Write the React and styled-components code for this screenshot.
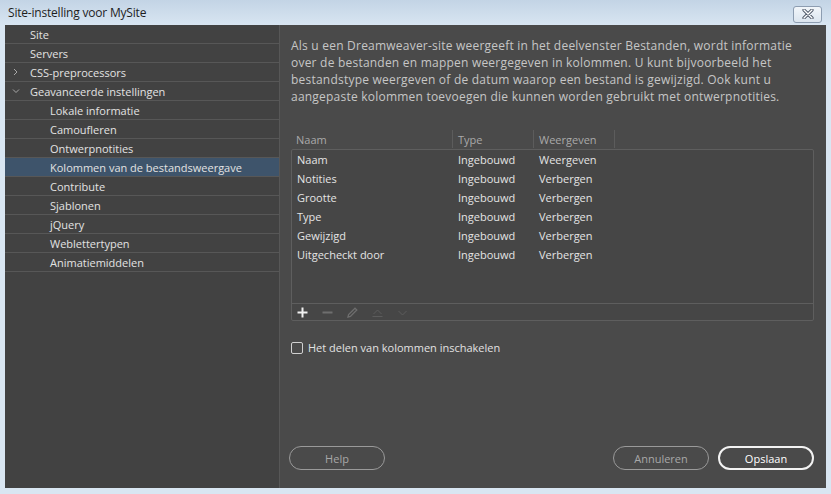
import React from 'react';
import styled, { createGlobalStyle } from 'styled-components';

const Global = createGlobalStyle`
  html, body { margin: 0; padding: 0; background: #d9e6f2; }
  body { font-family: "Open Sans", "Noto Sans", sans-serif; }
`;

const Frame = styled.div`
  width: 831px;
  height: 494px;
  box-sizing: border-box;
  padding: 0 5px 6px 5px;
  background: linear-gradient(#c3d4e5 0px, #d9e6f2 26px, #d9e6f2 100%);
  display: flex;
  flex-direction: column;
`;

const TitleBar = styled.div`
  height: 25px;
  display: flex;
  align-items: center;
  justify-content: space-between;
  padding: 0 4px 0 3px;
  font-family: "Open Sans", sans-serif;
  font-size: 12px;
  color: #1e1e1e;
  letter-spacing: -0.2px;
`;

const CloseButton = styled.div`
  width: 27px;
  height: 15px;
  margin-top: 3px;
  border: 1px solid #8d9db1;
  border-radius: 3px;
  background: linear-gradient(#f2f6fa, #dbe5ef);
  display: flex;
  align-items: center;
  justify-content: center;
`;

const Body = styled.div`
  flex: 1;
  display: flex;
  min-height: 0;
`;

const Sidebar = styled.div`
  width: 275px;
  background: #424242;
  border-right: 1px solid #575757;
`;

const TreeRow = styled.div`
  height: 18px;
  border-bottom: 1px solid #575757;
  display: flex;
  align-items: center;
  padding-left: ${p => (p.$level ? 45 : 7)}px;
  background: ${p => (p.$selected ? '#3e546b' : 'transparent')};
  color: #e2e2e2;
  font-size: 11px;
`;

const Chevron = styled.span`
  width: 18px;
  display: inline-flex;
  align-items: center;
`;

const Main = styled.div`
  flex: 1;
  background: #4a4a4a;
  padding: 12px 12px 18px 11px;
  display: flex;
  flex-direction: column;
`;

const Intro = styled.p`
  margin: 0;
  font-size: 12px;
  letter-spacing: 0.22px;
  line-height: 17px;
  color: #c6c6c6;
  white-space: nowrap;
`;

const HeaderRow = styled.div`
  display: flex;
  margin-top: 25px;
  height: 18px;
`;

const HeaderCell = styled.div`
  width: ${p => p.$w}px;
  box-sizing: border-box;
  padding-left: 5px;
  border-right: 1px solid #5c5c5c;
  font-size: 11px;
  color: #a9a9a9;
  display: flex;
  align-items: center;
`;

const TableBox = styled.div`
  margin-top: 1px;
  height: 170px;
  border: 1px solid #5e5e5e;
  border-radius: 2px;
  background: #464646;
  display: flex;
  flex-direction: column;
`;

const List = styled.div`
  flex: 1;
`;

const Row = styled.div`
  display: flex;
  height: 19px;
  align-items: center;
  font-size: 11px;
  color: #e4e4e4;
`;

const Cell = styled.div`
  width: ${p => p.$w}px;
  padding-left: ${p => p.$pad}px;
  box-sizing: border-box;
`;

const Toolbar = styled.div`
  height: 16px;
  border-top: 1px solid #5e5e5e;
  display: flex;
  align-items: center;
  padding-left: 5px;
  gap: 14px;
`;

const ToolIcon = styled.span`
  width: 11px;
  height: 11px;
  display: inline-flex;
  align-items: center;
  justify-content: center;
`;

const CheckRow = styled.label`
  margin-top: 19px;
  display: flex;
  align-items: center;
  gap: 5px;
  font-size: 11px;
  color: #e2e2e2;
`;

const Box = styled.span`
  width: 10px;
  height: 10px;
  border: 1px solid #d0d0d0;
  border-radius: 2px;
`;

const Footer = styled.div`
  margin-top: auto;
  display: flex;
  align-items: center;
`;

const Button = styled.div`
  width: ${p => (p.$primary ? 92 : 94)}px;
  height: ${p => (p.$primary ? 20 : 22)}px;
  border: ${p => (p.$primary ? '2px solid #f2f2f2' : '1px solid #9a9a9a')};
  border-radius: 12px;
  display: flex;
  align-items: center;
  justify-content: center;
  font-size: 11px;
  color: ${p => (p.$primary ? '#ffffff' : '#a8a8a8')};
  margin-left: ${p => p.$ml || 0}px;
`;

const tree = [
  { label: 'Site' },
  { label: 'Servers' },
  { label: 'CSS-preprocessors', chevron: 'right' },
  { label: 'Geavanceerde instellingen', chevron: 'down' },
  { label: 'Lokale informatie', level: 1 },
  { label: 'Camoufleren', level: 1 },
  { label: 'Ontwerpnotities', level: 1 },
  { label: 'Kolommen van de bestandsweergave', level: 1, selected: true },
  { label: 'Contribute', level: 1 },
  { label: 'Sjablonen', level: 1 },
  { label: 'jQuery', level: 1 },
  { label: 'Weblettertypen', level: 1 },
  { label: 'Animatiemiddelen', level: 1 },
];

const rows = [
  ['Naam', 'Ingebouwd', 'Weergeven'],
  ['Notities', 'Ingebouwd', 'Verbergen'],
  ['Grootte', 'Ingebouwd', 'Verbergen'],
  ['Type', 'Ingebouwd', 'Verbergen'],
  ['Gewijzigd', 'Ingebouwd', 'Verbergen'],
  ['Uitgecheckt door', 'Ingebouwd', 'Verbergen'],
];

function ChevronIcon({ dir }) {
  const d = dir === 'right' ? 'M2 1 L5 4 L2 7' : 'M1 2.5 L4 5.5 L7 2.5';
  return (
    <svg width="8" height="8" viewBox="0 0 8 8">
      <path d={d} fill="none" stroke="#a8a8a8" strokeWidth="1" />
    </svg>
  );
}

export default function App() {
  return (
    <>
      <Global />
      <Frame>
        <TitleBar>
          <span>Site-instelling voor MySite</span>
          <CloseButton>
            <svg width="12" height="10" viewBox="0 0 12 10">
              <path d="M2 1 L10 9 M10 1 L2 9" stroke="#4b5566" strokeWidth="3.2" strokeLinecap="round" />
              <path d="M2 1 L10 9 M10 1 L2 9" stroke="#ffffff" strokeWidth="1.4" strokeLinecap="round" />
            </svg>
          </CloseButton>
        </TitleBar>
        <Body>
          <Sidebar>
            {tree.map(t => (
              <TreeRow key={t.label} $level={t.level} $selected={t.selected}>
                {!t.level && (
                  <Chevron>{t.chevron && <ChevronIcon dir={t.chevron} />}</Chevron>
                )}
                {t.label}
              </TreeRow>
            ))}
          </Sidebar>
          <Main>
            <Intro>
              Als u een Dreamweaver-site weergeeft in het deelvenster Bestanden, wordt informatie<br />
              over de bestanden en mappen weergegeven in kolommen. U kunt bijvoorbeeld het<br />
              bestandstype weergeven of de datum waarop een bestand is gewijzigd. Ook kunt u<br />
              aangepaste kolommen toevoegen die kunnen worden gebruikt met ontwerpnotities.
            </Intro>
            <HeaderRow>
              <HeaderCell $w={162}>Naam</HeaderCell>
              <HeaderCell $w={81}>Type</HeaderCell>
              <HeaderCell $w={81}>Weergeven</HeaderCell>
            </HeaderRow>
            <TableBox>
              <List>
                {rows.map(r => (
                  <Row key={r[0]}>
                    <Cell $w={161} $pad={5}>{r[0]}</Cell>
                    <Cell $w={81} $pad={5}>{r[1]}</Cell>
                    <Cell $w={81} $pad={5}>{r[2]}</Cell>
                  </Row>
                ))}
              </List>
              <Toolbar>
                <ToolIcon>
                  <svg width="11" height="11" viewBox="0 0 11 11">
                    <path d="M5.5 0.5 V10.5 M0.5 5.5 H10.5" stroke="#f0f0f0" strokeWidth="2" />
                  </svg>
                </ToolIcon>
                <ToolIcon>
                  <svg width="11" height="11" viewBox="0 0 11 11">
                    <path d="M0.5 5.5 H10.5" stroke="#6e6e6e" strokeWidth="2" />
                  </svg>
                </ToolIcon>
                <ToolIcon>
                  <svg width="11" height="11" viewBox="0 0 11 11">
                    <path d="M1 10 L1.6 7.6 L8 1.2 L9.8 3 L3.4 9.4 Z" fill="none" stroke="#6e6e6e" strokeWidth="1.3" />
                  </svg>
                </ToolIcon>
                <ToolIcon>
                  <svg width="11" height="11" viewBox="0 0 11 11">
                    <path d="M1.5 7 L5.5 3 L9.5 7 M0.5 9.5 H10.5" fill="none" stroke="#5c5c5c" strokeWidth="1" />
                  </svg>
                </ToolIcon>
                <ToolIcon>
                  <svg width="11" height="11" viewBox="0 0 11 11">
                    <path d="M1.5 4 L5.5 8 L9.5 4" fill="none" stroke="#5c5c5c" strokeWidth="1" />
                  </svg>
                </ToolIcon>
              </Toolbar>
            </TableBox>
            <CheckRow>
              <Box />
              Het delen van kolommen inschakelen
            </CheckRow>
            <Footer>
              <Button $ml={-2}>Help</Button>
              <Button $ml={228}>Annuleren</Button>
              <Button $primary $ml={9}>Opslaan</Button>
            </Footer>
          </Main>
        </Body>
      </Frame>
    </>
  );
}
